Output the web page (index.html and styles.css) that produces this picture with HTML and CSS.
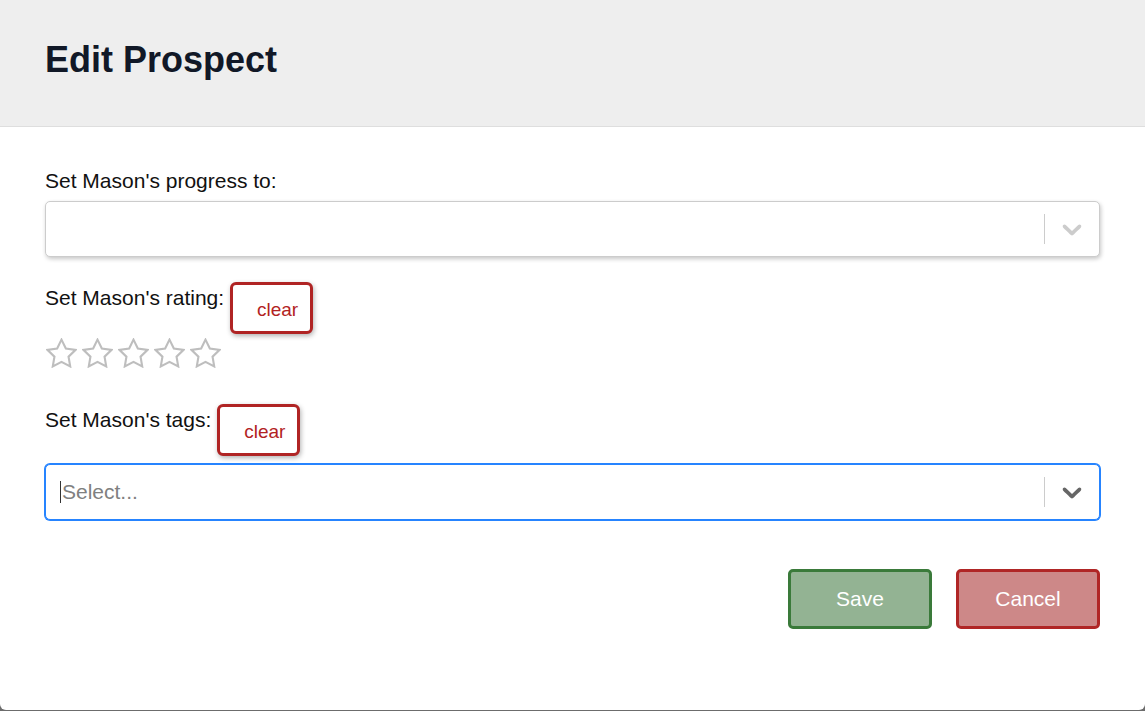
FILE: index.html
```html
<!DOCTYPE html>
<html lang="en">

<head>
    <meta charset="UTF-8" />
    <meta name="viewport" content="width=device-width, initial-scale=1.0" />
    <title>Edit Prospect</title>
    <link rel="stylesheet" href="styles.css">
</head>

<body class="page">

    <div class="modal">
        <header class="modal-head">
            <h2 class="modal-title">Edit Prospect</h2>
        </header>

        <main class="modal-body">
            <p class="field-label">Set Mason's progress to:</p>
            <div class="select">
                <div class="select-value"></div>
                <span class="select-sep"></span>
                <span class="select-arrow">
                    <svg viewBox="0 0 20 20" width="32" height="32" aria-hidden="true">
                        <path d="M4.516 7.548c0.436-0.446 1.043-0.481 1.576 0l3.908 3.747 3.908-3.747c0.533-0.481 1.141-0.446 1.574 0 0.436 0.445 0.408 1.197 0 1.615-0.406 0.418-4.695 4.502-4.695 4.502-0.217 0.223-0.502 0.335-0.787 0.335s-0.57-0.112-0.789-0.335c0 0-4.287-4.084-4.695-4.502s-0.436-1.17 0-1.615z" />
                    </svg>
                </span>
            </div>

            <div class="label-row">
                <span class="row-label">Set Mason's rating:</span>
                <button type="button" class="clear-bttn">clear</button>
            </div>
            <div class="stars">
                <svg class="star" viewBox="1 1 22 21" width="31" height="30"><polygon points="12,2 15.09,8.26 22,9.27 17,14.14 18.18,21.02 12,17.77 5.82,21.02 7,14.14 2,9.27 8.91,8.26" /></svg>
                <svg class="star" viewBox="1 1 22 21" width="31" height="30"><polygon points="12,2 15.09,8.26 22,9.27 17,14.14 18.18,21.02 12,17.77 5.82,21.02 7,14.14 2,9.27 8.91,8.26" /></svg>
                <svg class="star" viewBox="1 1 22 21" width="31" height="30"><polygon points="12,2 15.09,8.26 22,9.27 17,14.14 18.18,21.02 12,17.77 5.82,21.02 7,14.14 2,9.27 8.91,8.26" /></svg>
                <svg class="star" viewBox="1 1 22 21" width="31" height="30"><polygon points="12,2 15.09,8.26 22,9.27 17,14.14 18.18,21.02 12,17.77 5.82,21.02 7,14.14 2,9.27 8.91,8.26" /></svg>
                <svg class="star" viewBox="1 1 22 21" width="31" height="30"><polygon points="12,2 15.09,8.26 22,9.27 17,14.14 18.18,21.02 12,17.77 5.82,21.02 7,14.14 2,9.27 8.91,8.26" /></svg>
            </div>

            <div class="label-row tags-row">
                <span class="row-label">Set Mason's tags:</span>
                <button type="button" class="clear-bttn">clear</button>
            </div>
            <div class="select select-focus">
                <div class="select-value">
                    <span class="caret"></span><span class="placeholder">Select...</span>
                </div>
                <span class="select-sep"></span>
                <span class="select-arrow">
                    <svg viewBox="0 0 20 20" width="32" height="32" aria-hidden="true">
                        <path d="M4.516 7.548c0.436-0.446 1.043-0.481 1.576 0l3.908 3.747 3.908-3.747c0.533-0.481 1.141-0.446 1.574 0 0.436 0.445 0.408 1.197 0 1.615-0.406 0.418-4.695 4.502-4.695 4.502-0.217 0.223-0.502 0.335-0.787 0.335s-0.57-0.112-0.789-0.335c0 0-4.287-4.084-4.695-4.502s-0.436-1.17 0-1.615z" />
                    </svg>
                </span>
            </div>
        </main>

        <footer class="modal-foot">
            <button type="button" class="foot-bttn save-bttn">Save</button>
            <button type="button" class="foot-bttn cancel-bttn">Cancel</button>
        </footer>
    </div>

</body>

</html>
```

FILE: styles.css
```css
.page {
    margin: 0;
    background-color: rgb(108, 108, 108);
    font-family: "Liberation Sans", Arial, sans-serif;
}

.modal {
    height: 710px;
    background-color: rgb(255, 255, 255);
    border-radius: 0 0 6px 6px;
    display: flex;
    flex-direction: column;
    overflow: hidden;
}

.modal-head {
    background-color: rgb(238, 238, 238);
    border-bottom: 1px solid rgb(222, 222, 222);
    padding: 40px 45px 46px 45px;
}

.modal-title {
    margin: 0;
    font-size: 36px;
    line-height: 40px;
    font-weight: 700;
    color: rgb(17, 24, 39);
}

.modal-body {
    padding: 42px 45px 0 45px;
}

.field-label {
    margin: 0 0 8px 0;
    font-size: 21px;
    line-height: 24px;
    color: rgb(17, 17, 17);
}

.select {
    height: 56px;
    box-sizing: border-box;
    display: flex;
    align-items: center;
    border: 1px solid rgb(204, 204, 204);
    border-radius: 5px;
    background-color: rgb(255, 255, 255);
    box-shadow: 1px 2px 4px rgba(0, 0, 0, 0.22);
}

.select-focus {
    margin-top: 8px;
    border-color: rgb(38, 132, 255);
    box-shadow: 0 0 0 1px rgb(38, 132, 255);
}

.select-value {
    flex: 1;
    display: flex;
    align-items: center;
    padding-left: 14px;
}

.select-sep {
    width: 1px;
    height: 30px;
    background-color: rgb(204, 204, 204);
}

.select-arrow {
    width: 54px;
    display: flex;
    justify-content: center;
    align-items: center;
}

.select-arrow svg {
    fill: rgb(204, 204, 204);
}

.select-focus .select-arrow svg {
    fill: rgb(102, 102, 102);
}

.caret {
    width: 1px;
    height: 22px;
    background-color: rgb(51, 51, 51);
    margin-right: 1px;
}

.placeholder {
    font-size: 21px;
    line-height: 24px;
    color: rgb(128, 128, 128);
}

.label-row {
    margin-top: 25px;
    display: flex;
    align-items: flex-start;
    gap: 6px;
}

.tags-row {
    margin-top: 36px;
}

.row-label {
    margin-top: 4px;
    font-size: 21px;
    line-height: 24px;
    color: rgb(17, 17, 17);
}

.clear-bttn {
    width: 83px;
    height: 52px;
    box-sizing: border-box;
    padding: 3px 9px 0 21px;
    border: 3px solid rgb(176, 36, 36);
    border-radius: 6px;
    background-color: rgb(255, 255, 255);
    box-shadow: 1px 2px 5px rgba(0, 0, 0, 0.3);
    font-family: "Liberation Sans", Arial, sans-serif;
    font-size: 19px;
    color: rgb(178, 34, 34);
}

.stars {
    margin-top: 4px;
    margin-left: 1px;
    display: flex;
    gap: 5px;
}

.star {
    fill: none;
    stroke: rgb(190, 190, 190);
    stroke-width: 1.5;
    stroke-linejoin: miter;
}

.modal-foot {
    margin-top: 49px;
    padding: 0 45px;
    display: flex;
    justify-content: flex-end;
    gap: 24px;
}

.foot-bttn {
    width: 144px;
    height: 60px;
    border-radius: 5px;
    border: 3px solid;
    font-family: "Liberation Sans", Arial, sans-serif;
    font-size: 21px;
    color: rgb(255, 255, 255);
}

.save-bttn {
    background-color: rgb(147, 179, 147);
    border-color: rgb(58, 122, 58);
}

.cancel-bttn {
    background-color: rgb(205, 136, 136);
    border-color: rgb(176, 38, 38);
}
```
